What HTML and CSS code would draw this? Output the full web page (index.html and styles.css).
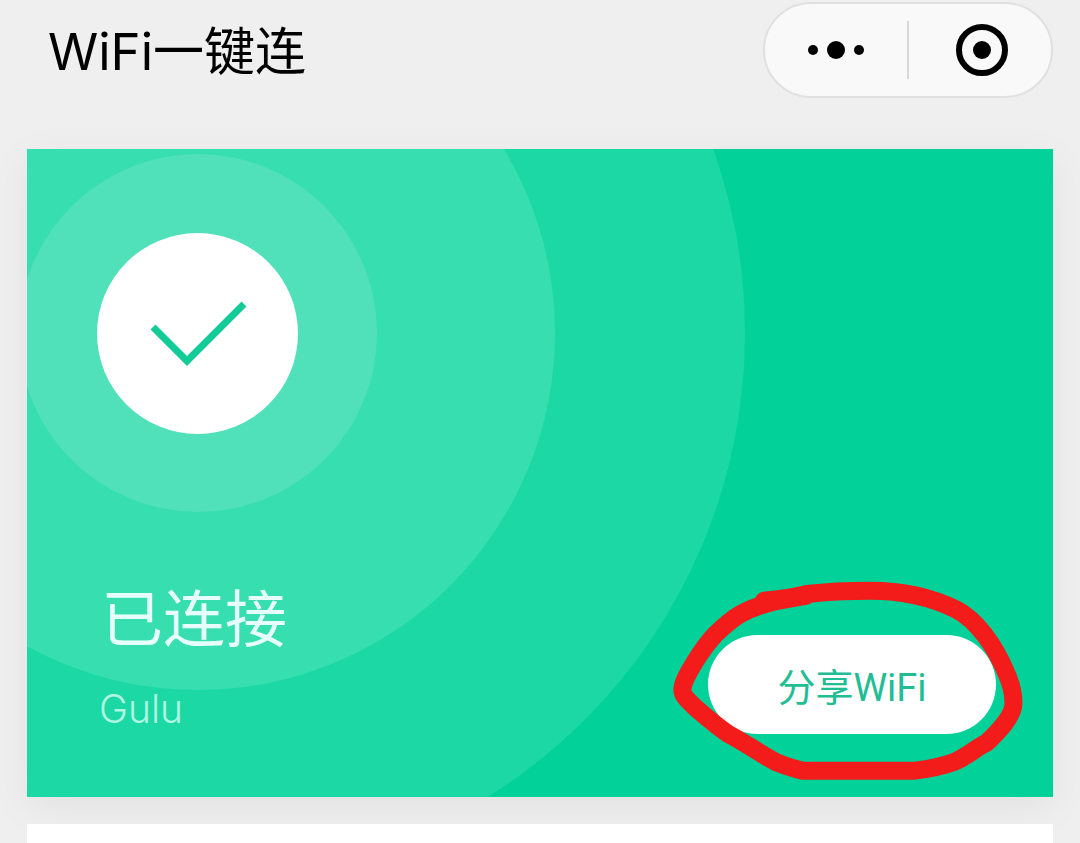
FILE: index.html
```html
<!DOCTYPE html>
<html lang="zh-CN">
  <head>
    <meta charset="UTF-8" />
    <meta name="viewport" content="width=device-width, initial-scale=1.0" />
    <title>WiFi一键连</title>
    <link rel="stylesheet" href="styles.css">
  </head>
  <body>
    <header class="navbar">
      <h1>WiFi一键连</h1>
      <div class="capsule">
        <button type="button" class="capsule-button" aria-label="更多">
          <svg width="56" height="18" viewBox="0 0 56 18">
            <circle cx="5" cy="9" r="5" />
            <circle cx="28" cy="9" r="9" />
            <circle cx="51" cy="9" r="5" />
          </svg>
        </button>
        <span class="divider"></span>
        <button type="button" class="capsule-button" aria-label="关闭">
          <svg width="52" height="52" viewBox="0 0 52 52">
            <circle cx="26" cy="26" r="23" fill="none" stroke="#000" stroke-width="6" />
            <circle cx="26" cy="26" r="9" />
          </svg>
        </button>
      </div>
    </header>

    <main class="content">
      <section class="card">
        <svg class="rings" width="1096" height="1096" viewBox="-548 -548 1096 1096">
          <circle r="547" fill="#1cd8a4" />
          <circle r="357" fill="#36deb0" />
          <circle r="179" fill="#50e1ba" />
        </svg>

        <div class="status-icon">
          <svg width="201" height="201" viewBox="0 0 201 201">
            <path d="M56 94 L90 128 L147 71" fill="none" stroke="#12cb97" stroke-width="7" />
          </svg>
        </div>

        <div class="card-footer">
          <div>
            <h2>已连接</h2>
            <p class="network">Gulu</p>
          </div>
          <div class="share">
            <button type="button" class="share-button">分享WiFi</button>
            <svg class="marker" width="380" height="220" viewBox="0 0 1140 660">
              <path d="M312 92 C355 88 400 82 440 72 C500 65 560 62 630 62 C725 62 815 82 888 118 C950 150 1003 225 1038 307 C1055 345 1062 375 1060 405 C1057 440 1020 480 980 518 C950 532 925 557 885 575 C845 590 805 597 765 602 L425 602 C395 593 370 586 345 575 C295 548 250 515 205 492 C170 468 138 440 105 412 C85 392 66 378 67 357 C70 330 90 300 107 272 C125 243 145 215 167 192 C190 170 213 148 240 133 C300 98 375 88 440 77" />
            </svg>
          </div>
        </div>
      </section>

      <section class="panel"></section>
    </main>
  </body>
</html>
```
FILE: styles.css
```css
* {
  box-sizing: border-box;
}

body {
  display: flex;
  flex-direction: column;
  min-height: 100vh;
  margin: 0;
  background-color: #efefef;
  font-family: Inter, "Noto Sans CJK SC", sans-serif;
}

h1,
h2,
p {
  margin: 0;
}

.navbar {
  display: flex;
  justify-content: space-between;
  align-items: center;
  padding: 2px 27px 0 48px;
}

h1 {
  padding-top: 4px;
  font-size: 51px;
  font-weight: 400;
  line-height: 72px;
  color: #000;
}

.capsule {
  display: grid;
  grid-template-columns: 1fr 2px 1fr;
  align-items: center;
  width: 290px;
  height: 96px;
  border: 2px solid #e0e0e0;
  border-radius: 48px;
  background-color: #f9f9f9;
}

.capsule-button {
  display: flex;
  justify-content: center;
  align-items: center;
  height: 100%;
  padding: 0;
  border: none;
  background: none;
  cursor: pointer;
}

.capsule-button:last-child {
  padding-left: 4px;
}

.divider {
  height: 58px;
  background-color: #d8d8d8;
}

.content {
  display: flex;
  flex: 1;
  flex-direction: column;
  gap: 27px;
  padding: 51px 27px 0;
}

.card {
  position: relative;
  padding: 84px 57px 63px 70px;
  overflow: hidden;
  background-color: #02d29a;
  box-shadow: 0 10px 40px rgba(0, 0, 0, 0.06);
}

.rings {
  position: absolute;
  top: -364px;
  left: -377px;
}

.status-icon {
  position: relative;
  width: 201px;
  height: 201px;
  border-radius: 50%;
  background-color: #fff;
}

.card-footer {
  position: relative;
  display: flex;
  justify-content: space-between;
  align-items: flex-end;
  margin-top: 146px;
}

h2 {
  padding-left: 4px;
  font-size: 62px;
  font-weight: 400;
  line-height: 80px;
  color: #e6fffa;
}

.network {
  margin-top: 24px;
  padding-left: 2px;
  font-size: 39px;
  font-weight: 300;
  line-height: 50px;
  color: #b0f5e2;
}

.share {
  position: relative;
}

.share-button {
  display: block;
  width: 288px;
  height: 99px;
  padding: 0;
  border: none;
  border-radius: 50px;
  background-color: #fff;
  font-family: Roboto, "Noto Sans CJK SC", sans-serif;
  font-size: 38px;
  color: #22bd94;
  cursor: pointer;
}

/* hand-drawn highlight around the share button */
.marker {
  position: absolute;
  top: -65px;
  left: -48px;
  fill: none;
  stroke: #f41b1b;
  stroke-width: 54;
  stroke-linecap: round;
  stroke-linejoin: round;
  pointer-events: none;
}

.panel {
  position: relative;
  flex: 1;
  background-color: #fff;
}
```
